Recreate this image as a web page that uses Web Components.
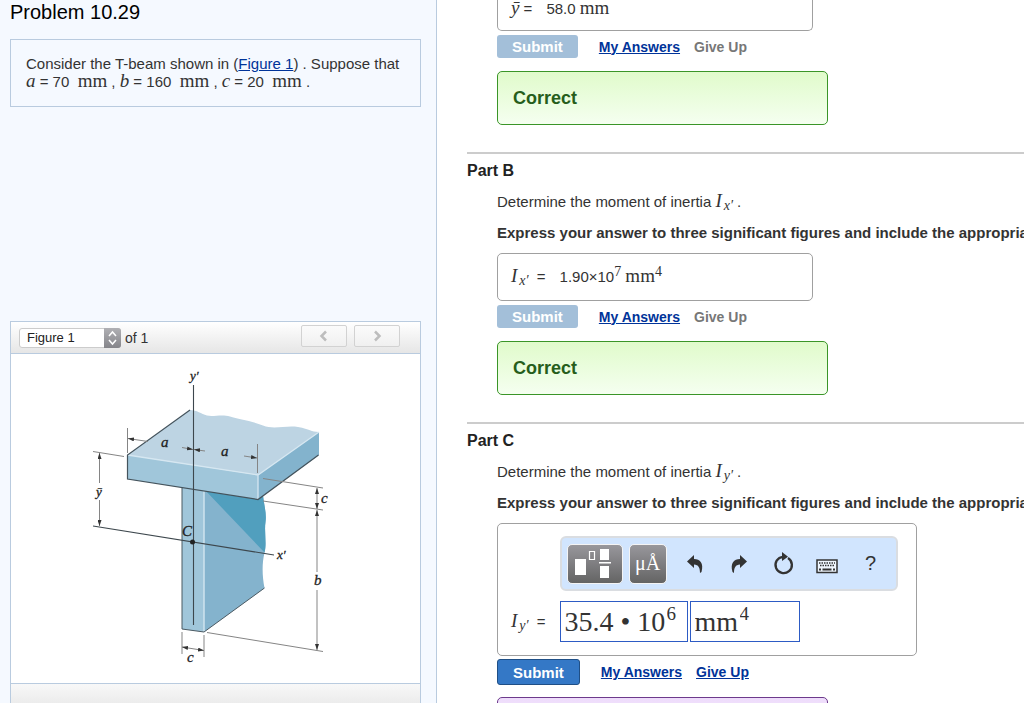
<!DOCTYPE html>
<html lang="en">
<head>
<meta charset="utf-8">
<meta name="viewport" content="width=device-width, initial-scale=1">
<title>Problem 10.29</title>
<style>
    body {
        margin: 0;
        background: #fff;
        color: #333;
        font: 15px/20px "Liberation Sans", Arial, sans-serif;
    }
</style>
</head>
<body>
<problem-page>
    <span slot="title">Problem 10.29</span>
    <problem-statement slot="side">
        Consider the T-beam shown in (<a href="#figure">Figure 1</a>) . Suppose that
        <br><math-var>a</math-var> = 70 &nbsp;<math-unit>mm</math-unit> , <math-var>b</math-var> = 160 &nbsp;<math-unit>mm</math-unit> , <math-var>c</math-var> = 20 &nbsp;<math-unit>mm</math-unit> .
    </problem-statement>
    <figure-viewer slot="side" id="figure"><tbeam-diagram></tbeam-diagram></figure-viewer>

    <answer-box continued>
        <math-var slot="label">ȳ</math-var>
        58.0 <math-unit>mm</math-unit>
    </answer-box>
    <answer-actions done></answer-actions>
    <answer-feedback>Correct</answer-feedback>

    <problem-part>
        <span slot="name">Part B</span>
        <span slot="question">Determine the moment of inertia <math-var sub="x′">I</math-var>.</span>
        <answer-box>
            <math-var slot="label" sub="x′">I</math-var>
            1.90×10<math-unit sup="7"></math-unit> <math-unit sup="4">mm</math-unit>
        </answer-box>
        <answer-actions done></answer-actions>
        <answer-feedback>Correct</answer-feedback>
    </problem-part>

    <problem-part>
        <span slot="name">Part C</span>
        <span slot="question">Determine the moment of inertia <math-var sub="y′">I</math-var>.</span>
        <answer-editor>
            <math-var slot="label" sub="y′">I</math-var>
        </answer-editor>
        <answer-actions></answer-actions>
        <answer-feedback kind="retry"></answer-feedback>
    </problem-part>
</problem-page>

<script>
const define = (name, html, setup) => {
    const template = document.createElement('template');
    template.innerHTML = html;
    customElements.define(name, class extends HTMLElement {
        constructor() {
            super();
            this.attachShadow({ mode: 'open' });
            this.shadowRoot.appendChild(template.content.cloneNode(true));
        }

        connectedCallback() {
            if (setup) setup(this, this.shadowRoot);
        }
    });
};

define('problem-page', `
    <style>
        :host {
            display: grid;
            grid-template-columns: 437fr 587fr;
            height: 100vh;
            overflow: hidden;
        }

        aside {
            display: flex;
            flex-direction: column;
            box-sizing: border-box;
            min-width: 0;
            padding: 0 15px 0 10px;
            border-right: 1px solid #b9cbdf;
            background: #f5f9ff;
        }

        h1 {
            margin: 0 0 15px;
            color: #000;
            font-size: 20px;
            font-weight: normal;
            line-height: 24px;
        }

        main {
            min-width: 0;
            overflow: hidden;
            padding-left: 30px;
            --indent: 30px;
        }
    </style>
    <aside>
        <h1><slot name="title"></slot></h1>
        <slot name="side"></slot>
    </aside>
    <main><slot></slot></main>
`);

define('problem-statement', `
    <style>
        :host {
            display: block;
            padding: 15px;
            border: 1px solid #b9cbdf;
            line-height: 18px;
        }

        ::slotted(a) { color: #003399; }
    </style>
    <slot></slot>
`);

// No whitespace around the slots here, it would show inside the line
define('math-var', `<style>
        :host {
            font: italic 19px/0 "Liberation Serif", "Times New Roman", serif;
            white-space: nowrap;
        }

        sub {
            font-size: 14px;
            line-height: 0;
            vertical-align: -3px;
        }

        :host([sub]) sub { padding: 0 4px 0 2px; }
    </style><slot></slot><sub></sub>`, (host, root) => {
    root.querySelector('sub').textContent = host.getAttribute('sub') || '';
});

define('math-unit', `<style>
        :host {
            font: 19px/0 "Liberation Serif", "Times New Roman", serif;
            white-space: nowrap;
        }

        sup {
            font-size: 14px;
            line-height: 0;
            vertical-align: 6px;
        }
    </style><slot></slot><sup></sup>`, (host, root) => {
    root.querySelector('sup').textContent = host.getAttribute('sup') || '';
});

define('figure-viewer', `
    <style>
        :host {
            display: block;
            margin-top: auto;
            border: 1px solid #b9cbdf;
            border-bottom: 0;
            background: #fff;
        }

        header, footer {
            display: flex;
            align-items: center;
            background: linear-gradient(#fff, #e6e6e6);
        }

        header {
            gap: 4px;
            height: 31px;
            padding: 0 20px 0 8px;
            border-bottom: 1px solid #b9cbdf;
            font-size: 14px;
        }

        footer {
            height: 19px;
            border-top: 1px solid #b9cbdf;
            background: linear-gradient(#f8f8f8, #ececec);
        }

        .picker {
            display: flex;
            position: relative;
        }

        select {
            appearance: none;
            box-sizing: border-box;
            width: 102px;
            height: 20px;
            padding: 0 20px 0 7px;
            border: 1px solid #ccc;
            border-radius: 3px;
            background: #fff;
            color: #222;
            font: 13px "Liberation Sans", Arial, sans-serif;
        }

        .picker svg {
            position: absolute;
            top: 0;
            right: 0;
            pointer-events: none;
        }

        nav {
            display: flex;
            gap: 7px;
            margin-left: auto;
            padding-bottom: 3px;
        }

        nav button {
            display: grid;
            place-items: center;
            width: 46px;
            height: 22px;
            padding: 0;
            border: 1px solid #d2d2d2;
            border-radius: 2px;
            background: linear-gradient(#fbfbfb, #f0f0f0);
        }
    </style>
    <header>
        <div class="picker">
            <select aria-label="Figure"><option>Figure 1</option></select>
            <svg width="17" height="20" viewBox="0 0 17 20" fill="none">
                <defs><linearGradient id="g" x2="0" y2="1"><stop stop-color="#b0b0b4"/><stop offset="1" stop-color="#85858a"/></linearGradient></defs>
                <path d="M0 0h14a3 3 0 0 1 3 3v14a3 3 0 0 1-3 3H0z" fill="url(#g)"/>
                <path d="M5 8l3.500-4 3.500 4M5 12l3.500 4 3.500-4" stroke="#fff" stroke-width="1.500"/>
            </svg>
        </div>
        <span>of 1</span>
        <nav>
            <button disabled aria-label="Previous figure"><svg width="10" height="12" fill="none" stroke="#bdbdbd" stroke-width="2.500"><path d="M7 1.500L2.500 6 7 10.500"/></svg></button>
            <button disabled aria-label="Next figure"><svg width="10" height="12" fill="none" stroke="#bdbdbd" stroke-width="2.500"><path d="M3 1.500L7.500 6 3 10.500"/></svg></button>
        </nav>
    </header>
    <slot></slot>
    <footer></footer>
`);

define('tbeam-diagram', `
    <style>
        :host { display: block; }

        svg {
            display: block;
            width: 100%;
            font: italic 15px "Liberation Serif", "Times New Roman", serif;
        }
    </style>
    <svg viewBox="11 354 409 329" role="img" aria-label="T-beam">
        <defs>
            <marker id="tip" viewBox="0 0 6 4" refX="6" refY="2" markerWidth="6" markerHeight="4" markerUnits="userSpaceOnUse" orient="auto-start-reverse">
                <path d="M0 0l6 2-6 2z" fill="#333"/>
            </marker>
        </defs>

        <!-- web -->
        <path d="M204 489H262.500C263 503 267 512 265.500 522S267 543 264.500 553 262 575 264.500 588L204 632z" fill="#84b3cd"/>
        <path d="M204 489H262.500C263 503 267 512 265.500 522S267 543 264.500 552.500z" fill="#519fbe"/>
        <path d="M182 485h22v147l-22-3z" fill="#a0c6da"/>
        <path d="M204 491v141" stroke="#cfe3ee" stroke-width="1.500"/>
        <path d="M182 487v142l22 3 60.500-44" fill="none" stroke="#4b5a63"/>

        <!-- flange -->
        <path d="M127.500 455L190 410C197 410 201 414 207 415.500S222 414 230 416.500 252 421 263 425.500 286 425 298 427 311 432 319 432L258 475z" fill="#bdd4e3"/>
        <path d="M127.500 455L258 475v24.500l-130.500-20.500z" fill="#a0c6da"/>
        <path d="M258 475l61-43v23l-61 44.500z" fill="#83b3cd"/>
        <path d="M127.500 455L258 475l61-43M258 475v24" fill="none" stroke="#d6e7f1" stroke-width="1.300"/>
        <path d="M190 410l-62.500 45v24L258 499.500l60.500-44.500" fill="none" stroke="#44535c" stroke-width="1.200"/>

        <!-- axes -->
        <path d="M193.500 385v240M93 526l181 29" stroke="#3d474d" stroke-width="1.100"/>
        <circle cx="192.500" cy="542" r="2.500" fill="#222"/>

        <!-- dimensions -->
        <g stroke="#858585">
            <path d="M127.500 428v25M257.500 444v29M93 451.500l31 5M263 478.500l60 9.500M263 501l60 9M207 632.500l116 19M182 632v22M204 635v22"/>
            <path d="M148 441.500l-20-3" marker-end="url(#tip)"/>
            <path d="M182 447.500l11 2" marker-end="url(#tip)"/>
            <path d="M205 451l-11-1.500" marker-end="url(#tip)"/>
            <path d="M244 456l13 2" marker-end="url(#tip)"/>
            <path d="M99.500 483v-30" marker-end="url(#tip)"/>
            <path d="M99.500 500v26" marker-end="url(#tip)"/>
            <path d="M317 488v21" marker-start="url(#tip)" marker-end="url(#tip)"/>
            <path d="M317 572v-62" marker-end="url(#tip)"/>
            <path d="M317 590v60" marker-end="url(#tip)"/>
            <path d="M182 647l22 3.500" marker-start="url(#tip)" marker-end="url(#tip)"/>
        </g>

        <g fill="#222" stroke="#222" stroke-width=".3">
            <text x="190" y="380" font-size="13">y′</text>
            <text x="161" y="447">a</text>
            <text x="221" y="456">a</text>
            <text x="96" y="496" font-size="13">ȳ</text>
            <text x="182" y="536">C</text>
            <text x="277" y="559" font-size="13">x′</text>
            <text x="321" y="503">c</text>
            <text x="314" y="585">b</text>
            <text x="187" y="662">c</text>
        </g>
    </svg>
`);

define('problem-part', `
    <style>
        :host {
            display: block;
            margin-top: 27px;
            padding-top: 7px;
            border-top: 2px solid #ccc;
        }

        h2 {
            margin: 0;
            color: #222;
            font-size: 16px;
            line-height: 20px;
        }

        p {
            margin: 10px 0 10px var(--indent);
            line-height: 22px;
            white-space: nowrap;
        }

        p.hint {
            font-weight: bold;
            line-height: 20px;
        }
    </style>
    <h2><slot name="name"></slot></h2>
    <p><slot name="question"></slot></p>
    <p class="hint">Express your answer to three significant figures and include the appropriate units.</p>
    <slot></slot>
`);

define('answer-box', `
    <style>
        :host {
            display: flex;
            align-items: center;
            gap: 14px;
            box-sizing: border-box;
            width: 316px;
            max-width: 100%;
            height: 48px;
            margin-left: var(--indent);
            padding: 0 13px;
            border: 1px solid #a0a0a0;
            border-radius: 5px;
        }

        /* upper part is scrolled out of the pane */
        :host([continued]) {
            align-items: start;
            height: 31px;
            border-top: 0;
            border-radius: 0 0 5px 5px;
            line-height: 18px;
        }
    </style>
    <div><slot name="label"></slot> =</div>
    <div><slot></slot></div>
`);

define('answer-actions', `
    <style>
        :host {
            display: flex;
            align-items: center;
            margin: 3px 0 12px var(--indent);
            font-size: 14px;
            font-weight: bold;
        }

        :host([done]) {
            margin-top: 4px;
            margin-bottom: 13px;
        }

        button {
            box-sizing: border-box;
            height: 26px;
            margin-right: 21px;
            padding: 0 15px;
            border: 1px solid #1f4f86;
            border-radius: 3px;
            background: #3478c6;
            color: #fff;
            font: bold 15px "Liberation Sans", Arial, sans-serif;
        }

        a {
            margin-right: 14px;
            color: #003399;
        }

        :host([done]) button {
            height: 23px;
            border: 0;
            background: #a3bfd9;
        }

        :host([done]) a:last-child {
            color: #777;
            text-decoration: none;
        }
    </style>
    <button>Submit</button>
    <a href="#answers">My Answers</a>
    <a href="#give-up">Give Up</a>
`, (host, root) => {
    if (!host.hasAttribute('done')) return;
    root.querySelector('button').disabled = true;
    root.querySelector('a:last-child').removeAttribute('href');
});

define('answer-feedback', `
    <style>
        :host {
            display: flex;
            align-items: center;
            box-sizing: border-box;
            width: 331px;
            max-width: 100%;
            height: 54px;
            margin-left: var(--indent);
            padding: 0 15px;
            border: 1px solid #3a9528;
            border-radius: 5px;
            background: linear-gradient(#e0fbcb, #f5fff0);
            color: #265e1b;
            font-size: 18px;
            font-weight: bold;
        }

        :host([kind="retry"]) {
            border-color: #6d3a8c;
            background: linear-gradient(#eedcfb, #faf3ff);
        }
    </style>
    <slot></slot>
`);

define('answer-editor', `
    <style>
        :host {
            display: grid;
            grid-template-columns: auto 1fr;
            align-items: center;
            gap: 10px 14px;
            box-sizing: border-box;
            width: 420px;
            max-width: 100%;
            margin-left: var(--indent);
            padding: 12px 13px;
            border: 1px solid #a0a0a0;
            border-radius: 5px;
        }

        .tools {
            grid-column: 2;
            display: flex;
            align-items: center;
            justify-self: start;
            box-sizing: border-box;
            height: 55px;
            padding: 0 3px 0 5px;
            border: 2px solid #dadde1;
            border-radius: 6px;
            background: #d1e5fe;
        }

        button {
            display: grid;
            place-items: center;
            width: 44px;
            height: 40px;
            padding: 0;
            border: 0;
            background: none;
            color: #333;
            font: 20px "Liberation Sans", Arial, sans-serif;
        }

        button.palette {
            width: 56px;
            margin-right: 6px;
            border: 1px solid #f4f4f4;
            border-radius: 5px;
            background: linear-gradient(#98979c, #646464);
            color: #fff;
            font: 20px "Liberation Serif", "Times New Roman", serif;
        }

        button.units { width: 38px; }

        .fields {
            display: flex;
            gap: 2px;
            padding-bottom: 1px;
        }

        .field {
            display: flex;
            box-sizing: border-box;
            width: 128px;
            height: 41px;
            padding-left: 4px;
            border: 1px solid #2d5bc4;
        }

        .field + .field { width: 110px; }

        input {
            box-sizing: border-box;
            min-width: 0;
            padding: 0;
            border: 0;
            outline: 0;
            background: none;
            color: #333;
            font: 28px/40px "Liberation Serif", "Times New Roman", serif;
        }

        input.exp {
            flex: 1;
            height: 24px;
            font-size: 19px;
            line-height: 24px;
        }

        .value { width: 102px; }
        .unit { width: 45px; }
    </style>
    <div class="tools">
        <button class="palette" aria-label="Templates">
            <svg width="40" height="32" viewBox="0 0 40 32" fill="#fff">
                <path d="M0 11h11v16H0zM25 1h9v11h-9zM25 18h9v12h-9zM24 14h12v1.500H24z"/>
                <path d="M14.500 3.500h5v8h-5z" fill="none" stroke="#fff" stroke-width="1.200"/>
            </svg>
        </button>
        <button class="palette units">μÅ</button>
        <button aria-label="Undo"><svg width="18" height="20" viewBox="0 0 18 20" fill="#333"><path d="M1 7.500L8 1v4C14 5 18 9 15.500 18L14 19C14 14 12.500 10.500 8 10.500V14z"/></svg></button>
        <button aria-label="Redo"><svg width="18" height="20" viewBox="0 0 18 20" fill="#333"><path d="M17 7.500L10 1v4C4 5 0 9 2.500 18L4 19C4 14 5.500 10.500 10 10.500V14z"/></svg></button>
        <button aria-label="Reset"><svg width="22" height="24" viewBox="0 0 22 24"><path d="M16 6A8.200 8.200 0 1 1 11 4.800" fill="none" stroke="#333" stroke-width="2.300"/><path d="M10 0l6 4.800L10 9z" fill="#333"/></svg></button>
        <button aria-label="Keyboard"><svg width="22" height="20" viewBox="0 0 22 20"><path d="M1 6h20v12.500H1z" fill="#eef5fd" stroke="#333" stroke-width="1.500"/><path d="M3 9h16M4 11.500h15" stroke="#333" stroke-width="1.700" stroke-dasharray="1.500 1"/><path d="M3 15.500h2M6.500 15.500h9M17 15.500h2" stroke="#333" stroke-width="2"/></svg></button>
        <button aria-label="Help">?</button>
    </div>
    <div><slot name="label"></slot> =</div>
    <div class="fields">
        <div class="field">
            <input class="value" value="35.4 • 10" aria-label="Value">
            <input class="exp" value="6" aria-label="Exponent of value">
        </div>
        <div class="field">
            <input class="unit" value="mm" aria-label="Units">
            <input class="exp" value="4" aria-label="Exponent of units">
        </div>
    </div>
`);
</script>
</body>
</html>
